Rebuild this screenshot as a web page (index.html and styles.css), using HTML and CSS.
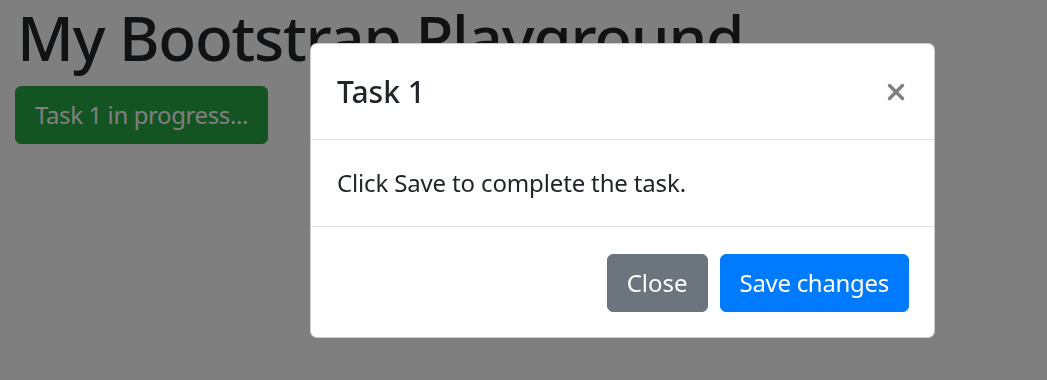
FILE: index.html
```html
<!DOCTYPE html>
<html lang="en">
<head>
<meta charset="utf-8">
<title>My Bootstrap Playground</title>
<link rel="stylesheet" href="styles.css">
</head>
<body>
<div class="page">
  <h1 class="page-title">My Bootstrap Playground</h1>
  <button class="btn btn-success btn-task" type="button">Task 1 in progress...</button>
</div>
<div class="backdrop"></div>
<div class="modal" role="dialog">
  <div class="modal-content">
    <div class="modal-header">
      <h5 class="modal-title">Task 1</h5>
      <button class="close" type="button" aria-label="Close">
        <svg class="close-icon" viewBox="0 0 18 18" width="18" height="18">
          <path d="M2.5 2.5 L15.5 15.5 M15.5 2.5 L2.5 15.5" />
        </svg>
      </button>
    </div>
    <div class="modal-body">
      <p class="modal-text">Click Save to complete the task.</p>
    </div>
    <div class="modal-footer">
      <button class="btn btn-secondary btn-close" type="button">Close</button>
      <button class="btn btn-primary btn-save" type="button">Save changes</button>
    </div>
  </div>
</div>
</body>
</html>
```
FILE: styles.css
```css
* { box-sizing: border-box; }
html, body { margin: 0; padding: 0; }
body {
  font-family: "Noto Sans", "Open Sans", sans-serif;
  color: #212529;
  background: #fff;
  font-size: 24px;
  line-height: 1.5;
}
.page {
  padding: 0 15px;
}
.page-title {
  margin: 0 0 12px;
  font-size: 62px;
  font-weight: 500;
  line-height: 74px;
  padding-left: 2px;
  letter-spacing: -1.25px;
  white-space: nowrap;
}
.btn {
  display: inline-block;
  font-family: inherit;
  font-size: 24px;
  line-height: 36px;
  padding: 10px 19px;
  border: 1px solid transparent;
  border-radius: 6px;
  color: #fff;
  cursor: pointer;
  white-space: nowrap;
}
.btn-task { letter-spacing: -0.4px; }
.btn-save { letter-spacing: -0.3px; }
.btn-success { background: #28a745; border-color: #28a745; }
.btn-secondary { background: #6c757d; border-color: #6c757d; }
.btn-primary { background: #007bff; border-color: #007bff; }

.backdrop {
  position: fixed;
  inset: 0;
  background: rgba(0, 0, 0, 0.5);
}
.modal {
  position: fixed;
  top: 43px;
  left: 310px;
  width: 625px;
}
.modal-content {
  background: #fff;
  border: 1px solid rgba(0, 0, 0, 0.2);
  border-radius: 7px;
  display: flex;
  flex-direction: column;
}
.modal-header {
  display: flex;
  align-items: center;
  justify-content: space-between;
  padding: 25px 24px 25px 26px;
  border-bottom: 1px solid #dee2e6;
}
.modal-title {
  margin: 0;
  font-size: 30px;
  font-weight: 500;
  line-height: 45px;
}
.close {
  background: none;
  border: 0;
  padding: 0;
  margin-right: 5px;
  display: flex;
  cursor: pointer;
}
.close-icon {
  fill: none;
  stroke: #000;
  stroke-opacity: 0.5;
  stroke-width: 3.4;
  stroke-linecap: round;
}
.modal-body {
  padding: 25px 26px 25px;
}
.modal-text {
  margin: 0;
  font-size: 24px;
  line-height: 36px;
  letter-spacing: -0.15px;
}
.modal-footer {
  display: flex;
  justify-content: flex-end;
  gap: 12px;
  padding: 27px 25px 25px;
  border-top: 1px solid #dee2e6;
}
```
